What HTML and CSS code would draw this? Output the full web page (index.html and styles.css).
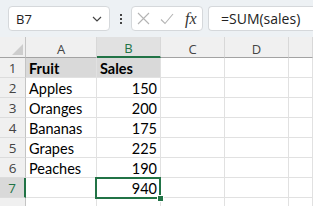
FILE: index.html
```html
<!DOCTYPE html>
<html lang="en">
<head>
    <meta charset="UTF-8">
    <title>Sales</title>
    <link rel="stylesheet" href="styles.css">
</head>
<body>
    <div class="formula-bar">
        <div class="name-box">
            <span>B7</span>
            <svg class="chevron" width="10" height="6" viewBox="0 0 10 6">
                <path d="M1 1 L5 5 L9 1" fill="none" stroke="#444" stroke-width="1.2"/>
            </svg>
        </div>
        <div class="more">
            <span class="dot"></span>
            <span class="dot"></span>
            <span class="dot"></span>
        </div>
        <div class="fx-box">
            <svg width="13" height="13" viewBox="0 0 13 13">
                <path d="M1 1 L12 12 M12 1 L1 12" stroke="#b4b4b4" stroke-width="1.1"/>
            </svg>
            <svg width="14" height="12" viewBox="0 0 14 12">
                <path d="M1 6.5 L5 10.5 L13 1" fill="none" stroke="#b4b4b4" stroke-width="1.1"/>
            </svg>
            <span class="fx">fx</span>
        </div>
        <div class="formula-input">=SUM(sales)</div>
    </div>

    <div class="sheet">
        <div class="hd corner"><span class="tri"></span></div>
        <div class="hd col">A</div>
        <div class="hd col sel">B</div>
        <div class="hd col">C</div>
        <div class="hd col">D</div>
        <div class="hd col"></div>

        <div class="hd row">1</div>
        <div class="cell title">Fruit</div>
        <div class="cell title">Sales</div>
        <div class="cell"></div><div class="cell"></div><div class="cell"></div>

        <div class="hd row">2</div>
        <div class="cell">Apples</div>
        <div class="cell num">150</div>
        <div class="cell"></div><div class="cell"></div><div class="cell"></div>

        <div class="hd row">3</div>
        <div class="cell">Oranges</div>
        <div class="cell num">200</div>
        <div class="cell"></div><div class="cell"></div><div class="cell"></div>

        <div class="hd row">4</div>
        <div class="cell">Bananas</div>
        <div class="cell num">175</div>
        <div class="cell"></div><div class="cell"></div><div class="cell"></div>

        <div class="hd row">5</div>
        <div class="cell">Grapes</div>
        <div class="cell num">225</div>
        <div class="cell"></div><div class="cell"></div><div class="cell"></div>

        <div class="hd row">6</div>
        <div class="cell">Peaches</div>
        <div class="cell num">190</div>
        <div class="cell"></div><div class="cell"></div><div class="cell"></div>

        <div class="hd row sel">7</div>
        <div class="cell"></div>
        <div class="cell num active">940<span class="handle"></span></div>
        <div class="cell"></div><div class="cell"></div><div class="cell"></div>

        <div class="hd row"></div>
        <div class="cell"></div><div class="cell"></div>
        <div class="cell"></div><div class="cell"></div><div class="cell"></div>
    </div>
</body>
</html>
```

FILE: styles.css
```css
body {
    margin: 0;
    width: 313px;
    height: 206px;
    overflow: hidden;
    background-color: #ffffff;
    font-family: 'Open Sans', 'Noto Sans', sans-serif;
}
.formula-bar {
    display: flex;
    align-items: center;
    height: 37px;
    padding-left: 8px;
    box-sizing: border-box;
    background-color: #edf1f4;
}
.name-box, .fx-box, .formula-input {
    display: flex;
    align-items: center;
    height: 25px;
    box-sizing: border-box;
    background-color: #ffffff;
    border: 1px solid #d5d8db;
    border-radius: 4px;
}
.name-box {
    width: 102px;
    padding: 0 7px 0 7px;
    justify-content: space-between;
    font-size: 13px;
    color: #222;
}
.more {
    display: flex;
    flex-direction: column;
    gap: 2px;
    width: 21px;
    align-items: center;
}
.dot {
    width: 2px;
    height: 2px;
    background-color: #444;
}
.fx-box {
    width: 72px;
    padding-left: 5px;
    gap: 10px;
}
.fx {
    font-family: 'Liberation Serif', serif;
    font-style: italic;
    font-size: 16px;
    color: #333;
    margin-left: 1px;
}
.formula-input {
    flex: 1;
    margin-left: 5px;
    padding-left: 12px;
    border-right: none;
    border-radius: 4px 0 0 4px;
    font-size: 14px;
    color: #222;
}
.sheet {
    display: grid;
    grid-template-columns: 26px 71px 64px 64px 64px 1fr;
    grid-template-rows: 21px;
    grid-auto-rows: 20px;
    height: 169px;
    overflow: hidden;
}
.hd {
    box-sizing: border-box;
    background-color: #f0f0f0;
    color: #444;
    font-size: 13px;
    display: flex;
    align-items: center;
    justify-content: center;
}
.hd.col {
    border-right: 1px solid #d8d8d8;
    border-bottom: 1px solid #a3a3a3;
    padding-top: 3px;
}
.hd.col.sel {
    background-color: #e1e1e1;
    color: #217346;
    border-bottom: 2px solid #217346;
}
.hd.row {
    border-right: 1px solid #c4c4c4;
    border-bottom: 1px solid #dcdcdc;
    font-size: 13.5px;
}
.hd.row.sel {
    background-color: #d9d9d9;
    color: #217346;
    border-right: 2px solid #217346;
}
.corner {
    position: relative;
    border-right: 1px solid #c4c4c4;
    border-bottom: 1px solid #a3a3a3;
}
.tri {
    position: absolute;
    right: 2px;
    bottom: 2px;
    width: 0;
    height: 0;
    border-left: 11px solid transparent;
    border-bottom: 11px solid #cdcdcd;
}
.cell {
    box-sizing: border-box;
    border-right: 1px solid #e1e1e1;
    border-bottom: 1px solid #e1e1e1;
    padding: 1px 3px 0 3px;
    font-family: 'Lato', sans-serif;
    font-size: 14.5px;
    line-height: 19px;
    color: #000;
    white-space: nowrap;
}
.title {
    background-color: #d9d9d9;
    font-weight: bold;
}
.num {
    text-align: right;
}
.active {
    position: relative;
}
.active::after {
    content: '';
    position: absolute;
    left: -2px;
    top: -1px;
    width: 66px;
    height: 22px;
    box-sizing: border-box;
    border: 2px solid #217346;
}
.handle {
    position: absolute;
    left: 60px;
    top: 17px;
    width: 7px;
    height: 7px;
    box-sizing: border-box;
    background-color: #217346;
    border: 1px solid #ffffff;
    z-index: 1;
}
```
